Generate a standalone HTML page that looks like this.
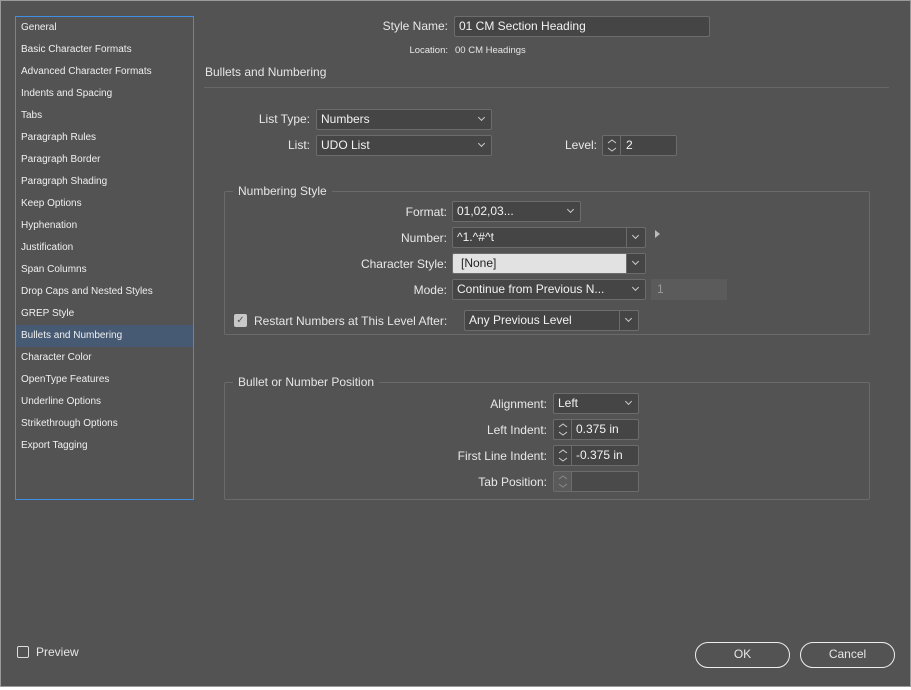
<!DOCTYPE html>
<html><head><style>
*{box-sizing:border-box;margin:0;padding:0}
body{width:911px;height:690px;background:#fff;position:relative;overflow:hidden;font-family:"Liberation Sans",sans-serif;color:#e6e6e6}
#d{position:absolute;left:0;top:0;width:911px;height:687px;background:#535353;box-shadow:inset 0 0 0 1px #9a9a9a}
.a{position:absolute}
.side{left:15px;top:16px;width:179px;height:484px;border:1px solid #3e8ee6}
.side div{height:22px;line-height:22px;font-size:10px;padding-left:5px;color:#f0f0f0}
.side .sel{background:#465a74}
.lb{position:absolute;font-size:12px;text-align:right;color:#e8e8e8}
.f{position:absolute;height:21px;background:#454545;border:1px solid #6c6c6c;border-radius:2px;font-size:12px;line-height:19px;padding-left:4px;color:#f2f2f2}
.chev{position:absolute;right:7px;top:5px;width:5px;height:5px;border-right:1px solid #ccc;border-bottom:1px solid #ccc;transform:rotate(45deg)}
.sep{position:absolute;top:0;bottom:0;width:1px;background:#6c6c6c}
.grp{position:absolute;border:1px solid #6a6a6a;border-radius:2px}
.gt{position:absolute;background:#535353;font-size:12px;padding:0 5px}
.spin{position:absolute;left:0;top:0;width:18px;height:19px;border-right:1px solid #6c6c6c}
.btn{position:absolute;height:26px;border:1.5px solid #eee;border-radius:13px;font-size:12px;text-align:center;line-height:23px}
</style></head><body>
<div id="d">
<div class="a side">
<div>General</div><div>Basic Character Formats</div><div>Advanced Character Formats</div><div>Indents and Spacing</div><div>Tabs</div><div>Paragraph Rules</div><div>Paragraph Border</div><div>Paragraph Shading</div><div>Keep Options</div><div>Hyphenation</div><div>Justification</div><div>Span Columns</div><div>Drop Caps and Nested Styles</div><div>GREP Style</div><div class="sel">Bullets and Numbering</div><div>Character Color</div><div>OpenType Features</div><div>Underline Options</div><div>Strikethrough Options</div><div>Export Tagging</div>
</div>

<div class="lb" style="left:340px;top:19px;width:108px">Style Name:</div>
<div class="f" style="left:454px;top:16px;width:256px">01 CM Section Heading</div>
<div class="lb" style="left:380px;top:45px;width:68px;font-size:9.5px">Location:</div>
<div class="a" style="left:455px;top:45px;font-size:9.5px">00 CM Headings</div>
<div class="a" style="left:205px;top:65px;font-size:12px">Bullets and Numbering</div>
<div class="a" style="left:204px;top:87px;width:685px;height:1px;background:#666"></div>

<div class="lb" style="left:220px;top:112px;width:90px">List Type:</div>
<div class="f" style="left:316px;top:109px;width:176px">Numbers<i class="chev"></i></div>
<div class="lb" style="left:220px;top:138px;width:90px">List:</div>
<div class="f" style="left:316px;top:135px;width:176px">UDO List<i class="chev"></i></div>
<div class="lb" style="left:540px;top:138px;width:57px">Level:</div>
<div class="f" style="left:602px;top:135px;width:75px;padding-left:23px"><div class="spin"><svg width="18" height="19"><path d="M5 7l4-3 4 3M5 12l4 3 4-3" fill="none" stroke="#ccc" stroke-width="1"/></svg></div>2</div>

<div class="grp" style="left:224px;top:191px;width:646px;height:144px"></div>
<div class="gt" style="left:233px;top:184px">Numbering Style</div>
<div class="lb" style="left:340px;top:205px;width:107px">Format:</div>
<div class="f" style="left:452px;top:201px;width:129px">01,02,03...<i class="chev"></i></div>
<div class="lb" style="left:340px;top:231px;width:107px">Number:</div>
<div class="f" style="left:452px;top:227px;width:194px">^1.^#^t<div class="sep" style="left:173px"></div><i class="chev"></i></div>
<div class="a" style="left:655px;top:230px;width:0;height:0;border-left:5px solid #bbb;border-top:4px solid transparent;border-bottom:4px solid transparent"></div>
<div class="lb" style="left:300px;top:257px;width:147px">Character Style:</div>
<div class="f" style="left:452px;top:253px;width:194px;background:#e2e2e2;color:#222;padding-left:8px">[None]<div class="sep" style="left:173px"></div><div style="position:absolute;left:174px;top:0;right:0;bottom:0;background:#454545"></div><i class="chev"></i></div>
<div class="lb" style="left:340px;top:283px;width:107px">Mode:</div>
<div class="f" style="left:452px;top:279px;width:194px">Continue from Previous N...<i class="chev"></i></div>
<div class="a" style="left:651px;top:279px;width:76px;height:21px;background:#5b5b5b;font-size:12px;line-height:21px;padding-left:6px;color:#999">1</div>
<div class="a" style="left:234px;top:314px;width:13px;height:13px;background:#c8c8c8;border-radius:2px;color:#555;font-size:10px;line-height:13px;text-align:center">✓</div>
<div class="a" style="left:254px;top:314px;font-size:12px">Restart Numbers at This Level After:</div>
<div class="f" style="left:464px;top:310px;width:175px">Any Previous Level<div class="sep" style="left:154px"></div><i class="chev"></i></div>

<div class="grp" style="left:224px;top:382px;width:646px;height:118px"></div>
<div class="gt" style="left:233px;top:375px">Bullet or Number Position</div>
<div class="lb" style="left:420px;top:397px;width:127px">Alignment:</div>
<div class="f" style="left:553px;top:393px;width:86px">Left<i class="chev"></i></div>
<div class="lb" style="left:420px;top:423px;width:127px">Left Indent:</div>
<div class="f" style="left:553px;top:419px;width:86px;padding-left:22px"><div class="spin"><svg width="18" height="19"><path d="M5 7l4-3 4 3M5 12l4 3 4-3" fill="none" stroke="#ccc"/></svg></div>0.375 in</div>
<div class="lb" style="left:420px;top:449px;width:127px">First Line Indent:</div>
<div class="f" style="left:553px;top:445px;width:86px;padding-left:22px"><div class="spin"><svg width="18" height="19"><path d="M5 7l4-3 4 3M5 12l4 3 4-3" fill="none" stroke="#ccc"/></svg></div>-0.375 in</div>
<div class="lb" style="left:420px;top:475px;width:127px">Tab Position:</div>
<div class="f" style="left:553px;top:471px;width:86px;padding-left:22px;background:#4a4a4a"><div class="spin" style="background:#5a5a5a"><svg width="18" height="19"><path d="M5 7l4-3 4 3M5 12l4 3 4-3" fill="none" stroke="#888"/></svg></div></div>

<div class="a" style="left:17px;top:646px;width:12px;height:12px;border:1px solid #ddd;border-radius:2px"></div>
<div class="a" style="left:36px;top:645px;font-size:12px">Preview</div>
<div class="btn" style="left:695px;top:642px;width:95px">OK</div>
<div class="btn" style="left:800px;top:642px;width:95px">Cancel</div>
</div>
</body></html>
